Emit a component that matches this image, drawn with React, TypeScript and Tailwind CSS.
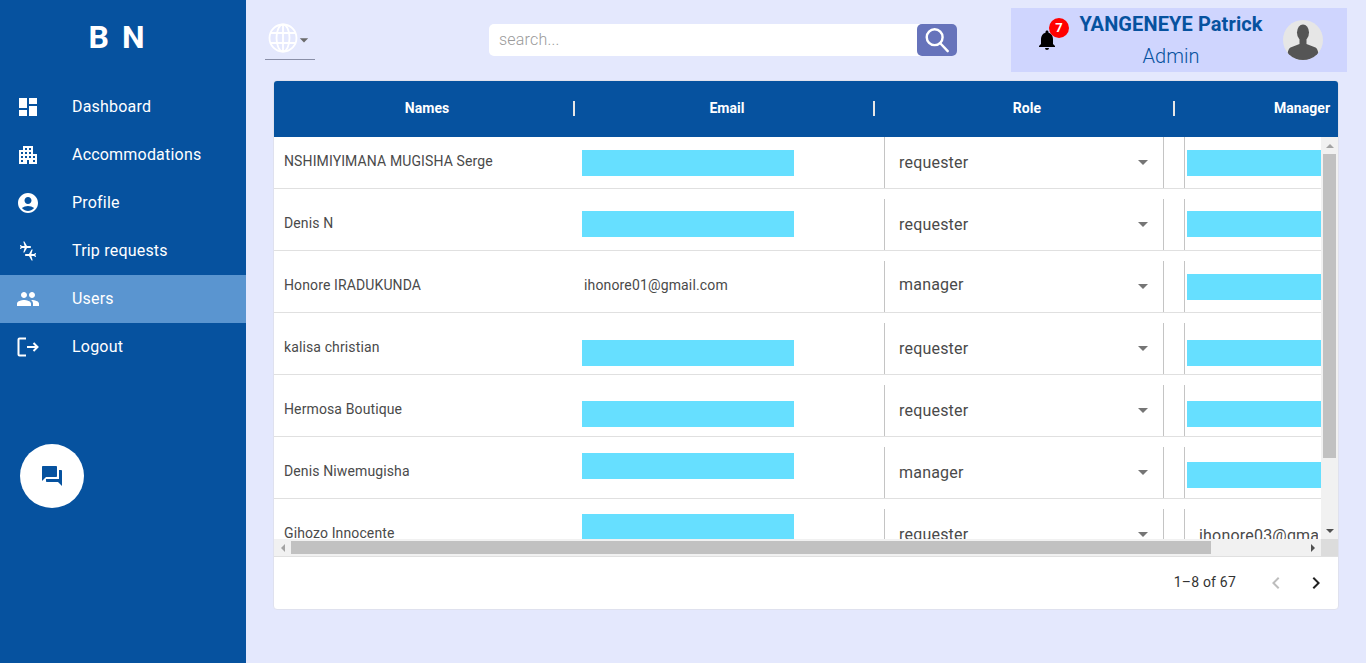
import type { FC } from "react";
import { MdDashboard, MdApartment, MdAccountCircle, MdConnectingAirports, MdPeople, MdQuestionAnswer, MdNotifications, MdChevronLeft, MdChevronRight, MdArrowDropDown } from "react-icons/md";

const menu = [
  { label: "Dashboard", icon: <MdDashboard size={24} /> },
  { label: "Accommodations", icon: <MdApartment size={24} /> },
  { label: "Profile", icon: <MdAccountCircle size={24} /> },
  { label: "Trip requests", icon: <MdConnectingAirports size={24} /> },
  { label: "Users", icon: <MdPeople size={24} />, active: true },
  {
    label: "Logout",
    icon: (
      <svg viewBox="0 0 24 24" width={24} height={24} fill="none" stroke="currentColor" strokeWidth={2}>
        <path d="M10 3.500H3.500a1 1 0 0 0-1 1v15a1 1 0 0 0 1 1H10" />
        <path d="M11 12h10.500M17.500 8l4 4-4 4" />
      </svg>
    ),
  },
];

const rows = [
  { name: "NSHIMIYIMANA MUGISHA Serge", role: "requester", emailTop: 23, managerTop: 23 },
  { name: "Denis N", role: "requester", emailTop: 22, managerTop: 22 },
  { name: "Honore IRADUKUNDA", role: "manager", email: "ihonore01@gmail.com", managerTop: 23 },
  { name: "kalisa christian", role: "requester", emailTop: 27, managerTop: 27 },
  { name: "Hermosa Boutique", role: "requester", emailTop: 26, managerTop: 26 },
  { name: "Denis Niwemugisha", role: "manager", emailTop: 16, managerTop: 25 },
  { name: "Gihozo Innocente", role: "requester", emailTop: 15, manager: "ihonore03@gmail.com" },
];

const Globe: FC = () => (
  <svg viewBox="0 0 30 30" width={30} height={30} fill="none" stroke="#ffffff" strokeWidth={1.8}>
    <circle cx="15" cy="15" r="13.5" />
    <ellipse cx="15" cy="15" rx="6.500" ry="13.5" />
    <path d="M15 1.500v27M3 10h24M3 20h24" />
  </svg>
);

const Row: FC<{ row: (typeof rows)[number] }> = ({ row }) => (
  <div className="flex h-[62px] w-[1100px] shrink-0 border-b border-[#e0e0e0] pt-[10px] text-[#4a4a4a]">
    <div className="flex w-[300px] items-center pb-[3px] pl-[10px] text-[14px] tracking-[0.12px]">{row.name}</div>
    <div className="w-[310px] pl-[8px]">
      {row.email ? (
        <div className="pl-[2px] pt-[14px] text-[14px] tracking-[0.15px]">{row.email}</div>
      ) : (
        <div className="h-[26px] w-[212px] bg-[#66dfff]" style={{ marginTop: row.emailTop - 10 }} />
      )}
    </div>
    <div className="flex w-[280px] items-center justify-between border-x border-[#c4c4c4] pl-[14px] pr-[8px] text-[16px] tracking-[0.2px]">
      <span className={row.email ? "-mt-[3px]" : ""}>{row.role}</span>
      <MdArrowDropDown size={24} className="-mt-[1px] text-[#757575]" />
    </div>
    <div className="w-[20px]" />
    <div className="w-[190px] border-l border-[#c4c4c4] pl-[2px]">
      {row.manager ? (
        <div className="ml-[12px] w-[119px] overflow-hidden whitespace-nowrap pt-[15px] text-[16px] tracking-[0.2px]">{row.manager}</div>
      ) : (
        <div className="h-[26px] w-[150px] bg-[#66dfff]" style={{ marginTop: (row.managerTop ?? 23) - 10 }} />
      )}
    </div>
  </div>
);

const Arrow: FC<{ className: string }> = ({ className }) => <span className={`h-0 w-0 border-solid ${className}`} />;

export default function App() {
  return (
    <div className="flex h-[663px] w-[1366px] overflow-hidden bg-[#e4e8fd] font-['Roboto',sans-serif]">
      <aside className="flex w-[246px] shrink-0 flex-col bg-[#06529f] text-white">
        <div className="flex h-[83px] justify-center pr-[13px] pt-[18px] text-[32px] font-bold leading-[38px] [word-spacing:5px]">B N</div>
        <nav className="flex flex-col">
          {menu.map((item) => (
            <div key={item.label} className={`flex h-[48px] items-center pl-[16px] ${item.active ? "bg-[#5a95d0]" : ""}`}>
              <span className="w-[56px]">{item.icon}</span>
              <span className="text-[16px] tracking-[0.2px]">{item.label}</span>
            </div>
          ))}
        </nav>
        <button className="ml-[20px] mt-[73px] flex h-[64px] w-[64px] items-center justify-center rounded-full bg-white text-[#06529f]">
          <MdQuestionAnswer size={24} />
        </button>
      </aside>

      <main className="flex min-w-0 flex-1 flex-col">
        <header className="flex h-[80px] shrink-0">
          <div className="ml-[19px] mt-[23px] flex h-[37px] w-[50px] items-start border-b border-[#8a8fa8] pl-[3px]">
            <Globe />
            <MdArrowDropDown size={20} className="-ml-[4px] mt-[7px] text-[#6b6b6b]" />
          </div>
          <div className="ml-[174px] mt-[24px] flex h-[32px] w-[468px] rounded-[5px] bg-white">
            <span className="flex-1 pl-[10px] text-[16px] font-light leading-[32px] tracking-[0.2px] text-[#9a9a9a]">search...</span>
            <span className="flex w-[40px] items-center justify-center rounded-[5px] bg-[#6673bb]">
              <svg viewBox="0 0 30 30" width={28} height={28} fill="none" stroke="#ffffff" strokeWidth={2.6}>
                <circle cx="12.5" cy="12" r="8.500" />
                <path d="M18.500 18.500l8 8.500" strokeLinecap="round" />
              </svg>
            </span>
          </div>
          <div className="ml-[54px] mt-[8px] flex h-[64px] w-[336px] bg-[#cfd5fe]">
            <div className="relative ml-[24px] mt-[20px] h-[24px] w-[24px] text-black">
              <MdNotifications size={24} />
              <span className="absolute -right-[10px] -top-[10px] flex h-[20px] w-[20px] items-center justify-center rounded-full bg-[#ff0000] text-[13px] font-bold text-white">7</span>
            </div>
            <div className="ml-[19px] flex w-[186px] flex-col items-center">
              <span className="mt-[3px] whitespace-nowrap text-[20px] font-bold leading-[27px] tracking-[0.1px] text-[#06529f]">YANGENEYE Patrick</span>
              <span className="mt-[5px] text-[20px] font-light leading-[27px] text-[#06529f]">Admin</span>
            </div>
            <div className="ml-[19px] mt-[12px] h-[40px] w-[40px] overflow-hidden rounded-full bg-[#e6e6e6]">
              <svg viewBox="0 0 40 40" width={40} height={40} fill="#555555">
                <ellipse cx="20" cy="12.500" rx="6" ry="8" />
                <path d="M16.500 19h7v5l9 3.500c2 1 3 4 3.500 12.500h-32c.5-8.500 1.500-11.500 3.500-12.500l9-3.500z" />
              </svg>
            </div>
          </div>
        </header>

        <section className="ml-[27px] flex h-[530px] w-[1066px] flex-col overflow-hidden rounded-[4px] border border-[#dfe1ee] bg-white">
          <div className="flex h-[56px] shrink-0 items-center overflow-hidden bg-[#06529f] pb-[2px] text-[14px] font-bold tracking-[0.05px] text-white">
            {["Names", "Email", "Role"].map((title) => (
              <div key={title} className="relative flex w-[300px] shrink-0 justify-center pl-[6px]">
                {title}
                <span className="absolute right-[-1px] top-[3px] h-[15px] w-[2px] bg-[#e6e6e6]" />
              </div>
            ))}
            <div className="pl-[100px]">Manager</div>
          </div>

          <div className="flex h-[419px] shrink-0 flex-col">
            <div className="flex h-[402px] shrink-0">
              <div className="flex w-[1047px] flex-col overflow-hidden">
                <div className="-mt-[10px] flex flex-col">
                  {rows.map((row) => (
                    <Row key={row.name} row={row} />
                  ))}
                </div>
              </div>
              <div className="flex w-[17px] flex-col items-center bg-[#f1f1f1]">
                <span className="flex h-[17px] shrink-0 items-center justify-center">
                  <Arrow className="border-x-[4px] border-b-[4px] border-x-transparent border-b-[#a3a3a3]" />
                </span>
                <span className="h-[304px] w-[13px] bg-[#c1c1c1]" />
                <span className="mt-auto flex h-[17px] shrink-0 items-center justify-center">
                  <Arrow className="border-x-[4px] border-t-[4px] border-x-transparent border-t-[#505050]" />
                </span>
              </div>
            </div>
            <div className="flex h-[17px] shrink-0 items-center bg-[#f1f1f1]">
              <span className="flex w-[17px] justify-center">
                <Arrow className="border-y-[4px] border-r-[4px] border-y-transparent border-r-[#a3a3a3]" />
              </span>
              <span className="h-[13px] w-[920px] bg-[#c1c1c1]" />
              <span className="ml-auto flex w-[17px] justify-center">
                <Arrow className="border-y-[4px] border-l-[4px] border-y-transparent border-l-[#505050]" />
              </span>
              <span className="h-full w-[17px] bg-[#dcdcdc]" />
            </div>
          </div>

          <div className="flex flex-1 items-center justify-end border-t border-[#e0e0e0] pb-[2px] text-[14px] tracking-[0.2px] text-[#333333]">
            <span>1–8 of 67</span>
            <MdChevronLeft size={24} className="ml-[28px] mt-[2px] text-[#bdbdbd]" />
            <MdChevronRight size={24} className="ml-[16px] mr-[10px] mt-[2px] text-[#222222]" />
          </div>
        </section>
      </main>
    </div>
  );
}
